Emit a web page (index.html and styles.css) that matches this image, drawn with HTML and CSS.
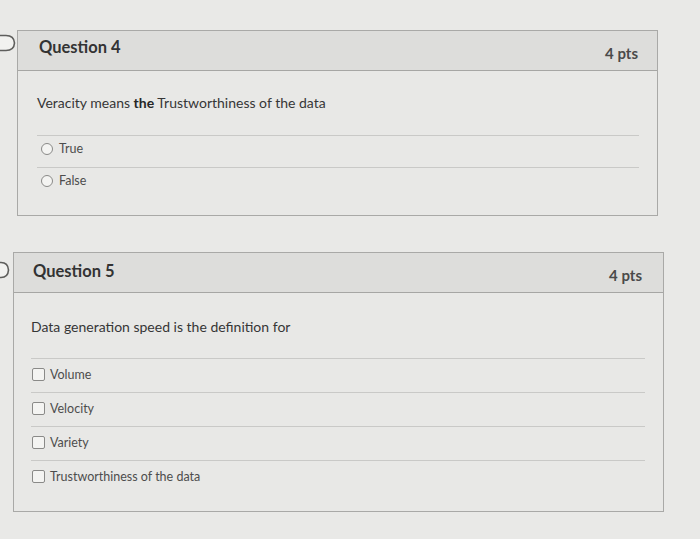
FILE: index.html
```html
<!DOCTYPE html>
<html>
<head>
<meta charset="utf-8">
<link rel="stylesheet" href="styles.css">
</head>
<body>
<div class="page">
  <div class="qrow q4">
    <svg class="tab" width="18" height="18" viewBox="0 0 18 18"><path d="M-2 1.5 H6 Q14 1.5 14.5 9 Q14 16.5 6 16.5 H-2" fill="#f2f2f0" stroke="#5e5e5c" stroke-width="1.6"/></svg>
    <div class="card">
      <div class="head"><span class="title">Question 4</span><span class="pts">4 pts</span></div>
      <div class="body">
        <p class="qtext">Veracity means <b>the</b> Trustworthiness of the data</p>
        <ul class="opts">
          <li><span class="radio"></span>True</li>
          <li><span class="radio"></span>False</li>
        </ul>
      </div>
    </div>
  </div>
  <div class="qrow q5">
    <svg class="tab" width="12" height="18" viewBox="0 0 12 18"><path d="M-4 1.5 H1 Q8 1.5 8.5 9 Q8 16.5 1 16.5 H-4" fill="#f2f2f0" stroke="#5e5e5c" stroke-width="1.6"/></svg>
    <div class="card">
      <div class="head"><span class="title">Question 5</span><span class="pts">4 pts</span></div>
      <div class="body">
        <p class="qtext">Data generation speed is the definition for</p>
        <ul class="opts">
          <li><span class="check"></span>Volume</li>
          <li><span class="check"></span>Velocity</li>
          <li><span class="check"></span>Variety</li>
          <li><span class="check"></span>Trustworthiness of the data</li>
        </ul>
      </div>
    </div>
  </div>
</div>
</body>
</html>
```
FILE: styles.css
```css
html, body {
  margin: 0;
  padding: 0;
}
body {
  background: #e9e9e7;
  font-family: Lato, "Open Sans", sans-serif;
  width: 700px;
  height: 539px;
  overflow: hidden;
}
.page {
  padding-top: 30px;
  display: flex;
  flex-direction: column;
  gap: 36px;
}
.qrow {
  display: flex;
  align-items: flex-start;
}
.tab {
  flex: none;
}
.q4 .tab {
  margin-top: 4px;
}
.q4 .card {
  margin-left: -1px;
  width: 641px;
  height: 186px;
}
.q5 .tab {
  margin-top: 9px;
}
.q5 .card {
  margin-left: 1px;
  width: 651px;
  height: 260px;
}
.card {
  box-sizing: border-box;
  border: 1px solid #a9a9a7;
  background: #e8e8e6;
  display: flex;
  flex-direction: column;
}
.head {
  box-sizing: border-box;
  height: 40px;
  flex: none;
  background: #dddddb;
  border-bottom: 1px solid #a6a6a4;
  display: flex;
  align-items: center;
  justify-content: space-between;
  padding: 0 19px 0 21px;
}
.q5 .head {
  padding-left: 19px;
  padding-right: 21px;
}
.title {
  font-weight: 700;
  font-size: 16.5px;
  color: #333;
  margin-top: -7px;
}
.q5 .title {
  margin-top: -3px;
}
.pts {
  font-weight: 700;
  font-size: 15px;
  color: #4a4a4a;
  margin-top: 5px;
}
.q5 .pts {
  margin-top: 4px;
}
.body {
  padding: 0 18px 0 19px;
}
.q5 .body {
  padding-left: 17px;
  padding-right: 18px;
}
.qtext {
  margin: 0;
  font-size: 14px;
  color: #363636;
  line-height: 16px;
  padding-top: 24px;
  box-sizing: border-box;
}
.qtext b {
  font-weight: 700;
  color: #262626;
}
.q4 .qtext {
  height: 64px;
}
.q5 .qtext {
  padding-top: 26px;
  height: 65px;
}
.opts {
  list-style: none;
  margin: 0;
  padding: 0;
}
.opts li {
  box-sizing: border-box;
  border-top: 1px solid #c9c9c7;
  display: flex;
  align-items: center;
  font-size: 12.5px;
  color: #4d4d4d;
  height: 32px;
  padding-left: 4px;
  padding-bottom: 6px;
}
.q5 .opts li {
  height: 34px;
  padding-left: 1px;
  padding-bottom: 2px;
}
.radio {
  width: 10px;
  height: 10px;
  border: 1px solid #8a8a88;
  border-radius: 50%;
  background: #f4f4f2;
  margin-right: 6px;
  flex: none;
}
.check {
  width: 11px;
  height: 11px;
  border: 1px solid #8a8a88;
  border-radius: 2px;
  background: #f4f4f2;
  margin-right: 5px;
  flex: none;
}
```
